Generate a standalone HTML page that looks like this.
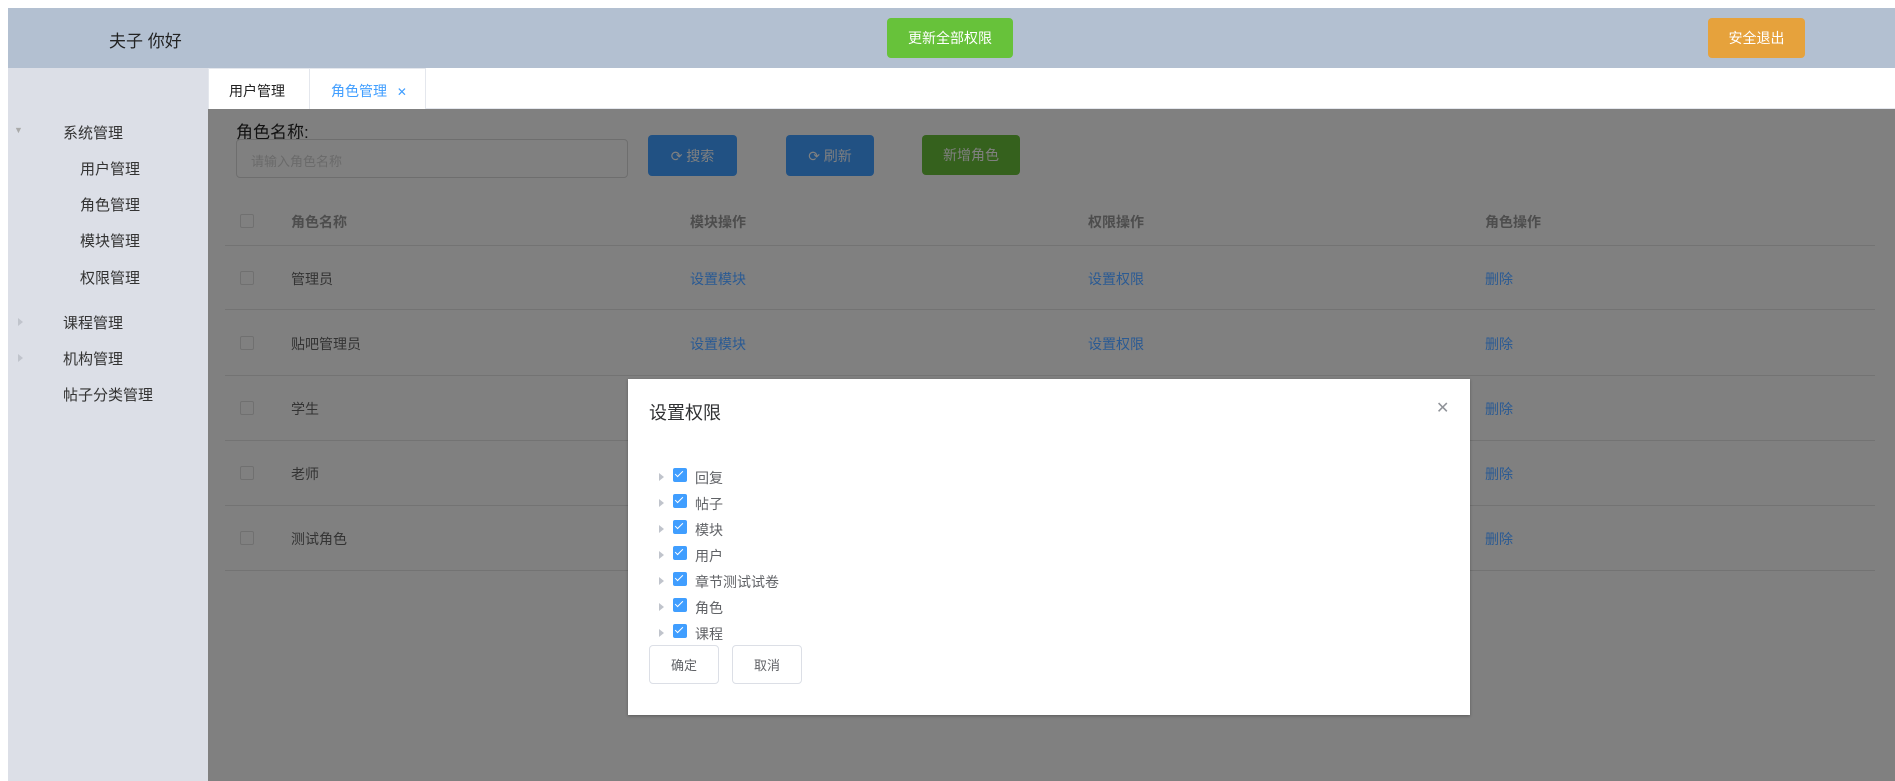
<!DOCTYPE html>
<html><head><meta charset="utf-8"><style>
*{margin:0;padding:0;box-sizing:border-box}
body{width:1895px;height:781px;background:#fff;position:relative;overflow:hidden;font-family:"Liberation Sans","Noto Sans CJK SC",sans-serif;}
.a{position:absolute;white-space:nowrap}
.hdr{left:8px;top:8px;width:1887px;height:60px;background:#b3c0d1}
.side{left:8px;top:68px;width:200px;height:713px;background:#dcdfe7}
.tabs{left:208px;top:68px;width:1687px;height:41px;background:#fff;border-bottom:1px solid #e4e7ed}
.gray{left:208px;top:109px;width:1687px;height:672px;background:#808080}
.btn{border-radius:4px;color:#808080;font-size:14px;display:flex;align-items:center;justify-content:center}
.th{font-size:14px;color:#4d4d4d;font-weight:bold}
.td{font-size:14px;color:#333}
.lk{font-size:14px;color:#2a5a93}
.line{left:225px;width:1650px;height:1px;background:#737373}
.cb{width:14px;height:14px;border:1px solid #707070;border-radius:2px}
.si{font-size:15px;color:#333}
.tr{font-size:14px;color:#606266}
.ck{width:14px;height:14px;background:#409eff;border-radius:2px}
.ar{width:0;height:0;border-left:5px solid #c0c4cc;border-top:4px solid transparent;border-bottom:4px solid transparent}
</style></head><body>
<div class="a hdr"></div>
<div class="a" style="left:109px;top:27px;font-size:17px;color:#222">夫子 你好</div>
<div class="a btn" style="left:887px;top:18px;width:126px;height:40px;background:#67c23a;color:#fff">更新全部权限</div>
<div class="a btn" style="left:1708px;top:18px;width:97px;height:40px;background:#e6a23c;color:#fff">安全退出</div>

<div class="a side"></div>
<div class="a" style="left:14px;top:125px;font-size:9px;color:#aaa">▼</div>
<div class="a si" style="left:63px;top:122px">系统管理</div>
<div class="a si" style="left:80px;top:158px">用户管理</div>
<div class="a si" style="left:80px;top:194px">角色管理</div>
<div class="a si" style="left:80px;top:230px">模块管理</div>
<div class="a si" style="left:80px;top:267px">权限管理</div>
<div class="a ar" style="left:18px;top:318px"></div>
<div class="a si" style="left:63px;top:312px">课程管理</div>
<div class="a ar" style="left:18px;top:354px"></div>
<div class="a si" style="left:63px;top:348px">机构管理</div>
<div class="a si" style="left:63px;top:384px">帖子分类管理</div>

<div class="a tabs"></div>
<div class="a" style="left:208px;top:68px;width:102px;height:42px;border:1px solid #e4e7ed;border-bottom:none;background:#fff"></div>
<div class="a" style="left:229px;top:81px;font-size:14px;color:#222">用户管理</div>
<div class="a" style="left:310px;top:68px;width:116px;height:42px;border:1px solid #e4e7ed;border-left:none;border-bottom:none;background:#fff"></div>
<div class="a" style="left:331px;top:81px;font-size:14px;color:#409eff">角色管理 <span style="font-size:12px;margin-left:6px">✕</span></div>

<div class="a gray"></div>
<div class="a" style="left:236px;top:118px;font-size:17px;color:#111">角色名称:</div>
<div class="a" style="left:236px;top:139px;width:392px;height:39px;border:1px solid #6e6e6e;border-radius:4px;padding:11px 14px;font-size:13px;color:#6a6a6a">请输入角色名称</div>
<div class="a btn" style="left:648px;top:135px;width:89px;height:41px;background:#215183">⟳ 搜索</div>
<div class="a btn" style="left:786px;top:135px;width:88px;height:41px;background:#215183">⟳ 刷新</div>
<div class="a btn" style="left:922px;top:135px;width:98px;height:40px;background:#35611d">新增角色</div>

<div class="a cb" style="left:240px;top:214px"></div>
<div class="a th" style="left:291px;top:212px">角色名称</div>
<div class="a th" style="left:690px;top:212px">模块操作</div>
<div class="a th" style="left:1088px;top:212px">权限操作</div>
<div class="a th" style="left:1485px;top:212px">角色操作</div>
<div class="a line" style="top:245px"></div>

<div class="a cb" style="left:240px;top:271px"></div><div class="a td" style="left:291px;top:269px">管理员</div>
<div class="a lk" style="left:690px;top:269px">设置模块</div><div class="a lk" style="left:1088px;top:269px">设置权限</div><div class="a lk" style="left:1485px;top:269px">删除</div>
<div class="a line" style="top:309px"></div>
<div class="a cb" style="left:240px;top:336px"></div><div class="a td" style="left:291px;top:334px">贴吧管理员</div>
<div class="a lk" style="left:690px;top:334px">设置模块</div><div class="a lk" style="left:1088px;top:334px">设置权限</div><div class="a lk" style="left:1485px;top:334px">删除</div>
<div class="a line" style="top:375px"></div>
<div class="a cb" style="left:240px;top:401px"></div><div class="a td" style="left:291px;top:399px">学生</div>
<div class="a lk" style="left:1485px;top:399px">删除</div>
<div class="a line" style="top:440px"></div>
<div class="a cb" style="left:240px;top:466px"></div><div class="a td" style="left:291px;top:464px">老师</div>
<div class="a lk" style="left:1485px;top:464px">删除</div>
<div class="a line" style="top:505px"></div>
<div class="a cb" style="left:240px;top:531px"></div><div class="a td" style="left:291px;top:529px">测试角色</div>
<div class="a lk" style="left:1485px;top:529px">删除</div>
<div class="a line" style="top:570px"></div>

<div class="a" style="left:628px;top:379px;width:842px;height:336px;background:#fff;box-shadow:0 1px 3px rgba(0,0,0,.3)"></div>
<div class="a" style="left:649px;top:399px;font-size:18px;color:#303133">设置权限</div>
<div class="a" style="left:1436px;top:398px;font-size:16px;color:#909399">✕</div>

<div class="a ar" style="left:659px;top:473px"></div><div class="a ck" style="left:673px;top:468px"></div><div class="a tr" style="left:695px;top:468px">回复</div>
<div class="a ar" style="left:659px;top:499px"></div><div class="a ck" style="left:673px;top:494px"></div><div class="a tr" style="left:695px;top:494px">帖子</div>
<div class="a ar" style="left:659px;top:525px"></div><div class="a ck" style="left:673px;top:520px"></div><div class="a tr" style="left:695px;top:520px">模块</div>
<div class="a ar" style="left:659px;top:551px"></div><div class="a ck" style="left:673px;top:546px"></div><div class="a tr" style="left:695px;top:546px">用户</div>
<div class="a ar" style="left:659px;top:577px"></div><div class="a ck" style="left:673px;top:572px"></div><div class="a tr" style="left:695px;top:572px">章节测试试卷</div>
<div class="a ar" style="left:659px;top:603px"></div><div class="a ck" style="left:673px;top:598px"></div><div class="a tr" style="left:695px;top:598px">角色</div>
<div class="a ar" style="left:659px;top:629px"></div><div class="a ck" style="left:673px;top:624px"></div><div class="a tr" style="left:695px;top:624px">课程</div>
<div class="a" style="left:676px;top:470px;font-size:9px;color:#fff;line-height:9px"></div>
<div class="a btn" style="left:649px;top:645px;width:70px;height:39px;border:1px solid #dcdfe6;color:#606266;font-size:13px">确定</div>
<div class="a btn" style="left:732px;top:645px;width:70px;height:39px;border:1px solid #dcdfe6;color:#606266;font-size:13px">取消</div>
<style>.ck::after{content:"";position:absolute;left:4px;top:1px;width:3px;height:7px;border:solid #fff;border-width:0 1px 1px 0;transform:rotate(45deg)}</style>
</body></html>
